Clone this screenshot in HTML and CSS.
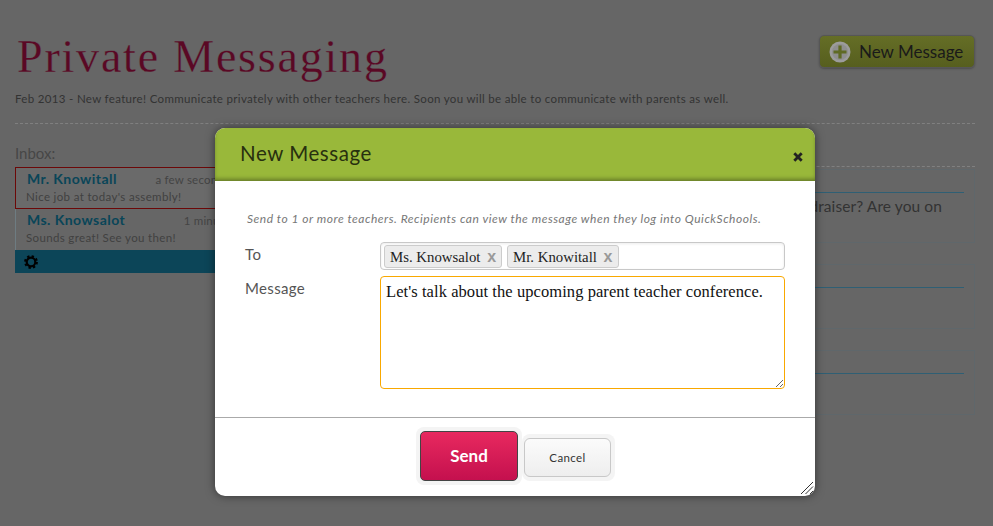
FILE: index.html
```html
<!DOCTYPE html>
<html lang="en">
<head>
<meta charset="utf-8">
<title>Private Messaging</title>
<link rel="stylesheet" href="styles.css">
</head>
<body>
<main class="page">
  <header class="top">
    <h1 class="title">Private Messaging</h1>
    <button class="new-btn" type="button">
      <svg class="plus" width="22" height="22" viewBox="0 0 22 22"><circle cx="11" cy="11" r="10.500" fill="#9c9c9c"/><circle cx="11" cy="11" r="8" fill="#8f8f8f"/><path d="M11 4.500v13M4.500 11h13" stroke="#5f6a24" stroke-width="3.200"/></svg>
      <span>New Message</span>
    </button>
  </header>
  <p class="note">Feb 2013 - New feature! Communicate privately with other teachers here. Soon you will be able to communicate with parents as well.</p>
  <div class="columns">
    <section class="inbox">
      <h2 class="inbox-title">Inbox:</h2>
      <div class="row selected">
        <div class="row-head"><b class="name">Mr. Knowitall</b><span class="time">a few seconds ago</span></div>
        <div class="snippet">Nice job at today's assembly!</div>
      </div>
      <div class="row">
        <div class="row-head"><b class="name">Ms. Knowsalot</b><span class="time">1 minute ago</span></div>
        <div class="snippet">Sounds great! See you then!</div>
      </div>
      <div class="inbox-bar">
        <svg width="14" height="14" viewBox="0 0 14 14"><circle cx="7" cy="7" r="4.300" fill="none" stroke="#000" stroke-width="2.200"/><circle cx="7" cy="7" r="5.800" fill="none" stroke="#000" stroke-width="2.200" stroke-dasharray="2.300 2.250"/></svg>
      </div>
    </section>
    <section class="thread">
      <div class="thread-head"></div>
      <article class="card first"><div class="rule"></div><p class="card-text">Hi, how is the planning going for the fundraiser? Are you on</p></article>
      <article class="card"><div class="rule"></div></article>
      <article class="card"><div class="rule"></div></article>
    </section>
  </div>
</main>

<div class="modal" role="dialog" aria-label="New Message">
  <div class="modal-head">
    <h2 class="modal-title">New Message</h2>
    <svg class="close" width="10" height="10" viewBox="0 0 10 10"><path d="M1.300 1.300l7.400 7.400M8.700 1.300L1.300 8.700" stroke="#222" stroke-width="2.800"/></svg>
  </div>
  <div class="modal-body">
    <p class="hint">Send to 1 or more teachers. Recipients can view the message when they log into QuickSchools.</p>
    <div class="field to">
      <label class="label">To</label>
      <div class="tokens">
        <span class="token">Ms. Knowsalot <i class="x">x</i></span>
        <span class="token">Mr. Knowitall <i class="x">x</i></span>
      </div>
    </div>
    <div class="field">
      <label class="label" for="msg">Message</label>
      <textarea class="area" id="msg">Let's talk about the upcoming parent teacher conference.</textarea>
    </div>
  </div>
  <div class="modal-foot">
    <span class="halo"><button class="send" type="button">Send</button></span>
    <span class="halo minor"><button class="cancel" type="button">Cancel</button></span>
  </div>
  <svg class="grip" width="14" height="14" viewBox="0 0 14 14"><path d="M1 13L13 1M5.500 13L13 5.500M10 13l3-3" stroke="#333" stroke-width="1"/></svg>
</div>
</body>
</html>
```
FILE: styles.css
```css
* { box-sizing: border-box; }
html, body { margin: 0; height: 100%; overflow: hidden; }
body { background: #666; font-family: "Lato", "Liberation Sans", sans-serif; color: #333; }

.page { padding: 0 18px 0 15px; height: 526px; }
.top { display: flex; justify-content: space-between; align-items: flex-start; padding-top: 35px; }
.title { margin: 0; padding-left: 2px; font: 400 46px/44px "Liberation Serif", serif; letter-spacing: 1.800px; color: #5a0824; -webkit-text-stroke: .3px #666; }
.new-btn {
  display: flex; align-items: center; gap: 8px; width: 156px; height: 33px; padding: 0 9px;
  background: linear-gradient(#656e26, #565e1e); border: 1px solid #565656; border-radius: 5px;
  font: 400 17px "Lato", sans-serif; color: #1a1a1a; box-shadow: 0 1px 2px rgba(0,0,0,.25);
}
.plus { flex: none; }
.note { margin: 13px 0 0; font-size: 11.500px; line-height: 14px; color: #333; letter-spacing: .33px; }
.columns { display: flex; gap: 27px; margin-top: 17px; border-top: 1px dashed #808080; }
.inbox { width: 248px; flex: none; padding-top: 20px; }
.inbox-title { margin: 0 0 5px; font-size: 15px; line-height: 18px; font-weight: 400; color: #474747; }
.row { padding: 2px 11px 0; height: 41px; border-left: 1px solid #6e7c82; white-space: nowrap; }
.row.selected { height: 42px; padding-top: 2px; border: 1px solid #6c0808; background: #6a6a6a; }
.row-head { display: flex; justify-content: space-between; align-items: baseline; }
.name { font-size: 14px; line-height: 18px; color: #094558; letter-spacing: .45px; }
.time { font-size: 11.500px; color: #444; letter-spacing: .2px; }
.snippet { font-size: 11.500px; line-height: 14px; color: #414141; margin: 2px 0 0 -1px; letter-spacing: .35px; }
.inbox-bar { height: 23px; background: #0c4558; padding: 5px 9px; }
.inbox-bar svg { display: block; }
.thread { flex: 1; min-width: 0; display: flex; flex-direction: column; }
.thread-head { height: 43px; flex: none; border-bottom: 1px dashed #808080; margin-bottom: 2px; }
.card { height: 65px; margin-bottom: 21px; border: 1px solid #5f676b; padding: 0 10px 0 20px; flex: none; }
.card.first { height: 74px; }
.rule { margin-top: 22px; height: 1px; background: #2f5f74; }
.card-text { margin: 4px 22px 0 0; font-size: 15.500px; line-height: 18px; letter-spacing: .1px; color: #333; white-space: nowrap; text-align: right; }

.modal {
  position: absolute; left: 215px; top: 128px; width: 600px; height: 368px;
  background: #fff; border-radius: 10px; box-shadow: 0 0 10px rgba(0,0,0,.5);
  display: flex; flex-direction: column; overflow: hidden;
}
.modal-head {
  height: 53px; flex: none; background: #99b83a; display: flex; align-items: center; justify-content: space-between;
  padding: 0 12px 0 25px; box-shadow: inset 0 -3px 4px -1px rgba(0,0,0,.35);
}
.modal-title { margin: 0; position: relative; top: -2px; font-size: 20.500px; font-weight: 400; color: #28300f; letter-spacing: .55px; }
.close { margin-top: 4px; }
.modal-body { flex: 1; padding: 31px 30px 0; }
.hint { margin: 0 0 16px 2px; font-size: 12px; line-height: 14px; font-style: italic; color: #777; letter-spacing: .52px; white-space: nowrap; }
.field { display: flex; margin-bottom: 6px; }
.label { width: 135px; flex: none; font-size: 15px; line-height: 18px; color: #555; letter-spacing: .35px; padding-top: 3px; }
.tokens { width: 405px; height: 28px; border: 1px solid #c8c8c8; border-radius: 4px; padding: 2px 3px; display: flex; gap: 5px; box-shadow: inset 0 1px 3px rgba(0,0,0,.08); }
.token { height: 23px; padding: 0 5px; background: #ececec; border: 1px solid #ccc; border-radius: 3px; font: 14.800px/21px "Liberation Serif", serif; color: #222; white-space: nowrap; }
.x { font: 700 16px/21px "Liberation Sans", sans-serif; color: #999; margin-left: 3px; font-style: normal; }
.area { display: block; width: 405px; height: 113px; padding: 5px; border: 1.500px solid #f9a800; border-radius: 4px; outline: none; font: 16.500px/20px "Liberation Serif", serif; letter-spacing: .07px; color: #111; }
.modal-foot { height: 79px; flex: none; border-top: 1px solid #aaa; padding: 0 0 2px 201px; display: flex; align-items: center; }
.halo { display: inline-block; padding: 4px; background: #f4f4f4; border-radius: 8px; }
.halo.minor { padding-left: 2px; margin-top: 3px; }
.send { display: block; width: 98px; height: 50px; padding: 0 0 1px; background: linear-gradient(#e8295f, #c4104e); border: 1px solid #444; border-radius: 5px; font: 700 17px "Lato", sans-serif; color: #fff; }
.cancel { display: block; width: 87px; height: 39px; background: linear-gradient(#fbfbfb, #eee); border: 1px solid #c8c8c8; border-radius: 6px; font: 400 11.500px "Lato", sans-serif; color: #333; letter-spacing: .4px; }
.grip { position: absolute; right: 1px; bottom: 1px; }
```
